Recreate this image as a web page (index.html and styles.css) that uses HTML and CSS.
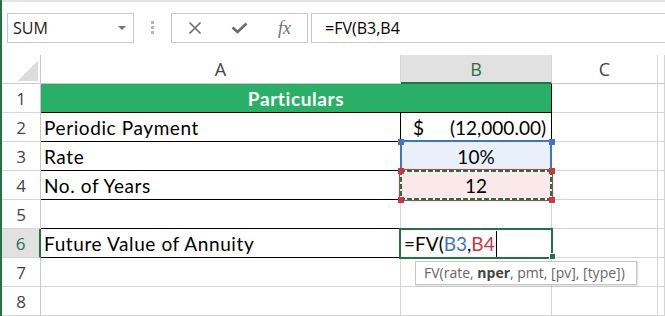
FILE: index.html
```html
<!DOCTYPE html>
<html lang="en">
<head>
    <meta charset="UTF-8">
    <title>FV Formula</title>
    <link rel="stylesheet" href="styles.css">
</head>
<body>

    <div class="app">
        <div class="toolbar">
            <div class="namebox">
                <span>SUM</span>
                <span class="caret"></span>
            </div>
            <div class="grip"><i></i><i></i><i></i></div>
            <div class="fbtns">
                <span class="btn">
                    <svg width="14" height="14" viewBox="0 0 14 14"><path d="M1.5 1.5 L12.5 12.5 M12.5 1.5 L1.5 12.5" stroke="#6a6a6a" stroke-width="1.6" fill="none"/></svg>
                </span>
                <span class="btn">
                    <svg width="17" height="12" viewBox="0 0 17 12"><path d="M1.5 5.5 L6.5 10 L15.5 1.5" stroke="#6a6a6a" stroke-width="2.6" fill="none"/></svg>
                </span>
                <span class="btn fx">fx</span>
            </div>
            <div class="fbar">=FV(B3,B4</div>
        </div>

        <div class="sheet">
            <!-- column headers -->
            <div class="corner"></div>
            <div class="ch">A</div>
            <div class="ch active">B</div>
            <div class="ch">C</div>
            <div class="ch"></div>

            <!-- row 1 -->
            <div class="rh">1</div>
            <div class="c title">Particulars</div>
            <div class="c"></div>
            <div class="c"></div>

            <!-- row 2 -->
            <div class="rh">2</div>
            <div class="c bl label">Periodic Payment</div>
            <div class="c bl money"><span>$</span><span>(12,000.00)</span></div>
            <div class="c"></div>
            <div class="c"></div>

            <!-- row 3 -->
            <div class="rh">3</div>
            <div class="c bl label">Rate</div>
            <div class="c mid ref-blue">
                10%
                <span class="box-blue"></span>
                <span class="dot blue tl"></span>
                <span class="dot blue tr"></span>
            </div>
            <div class="c"></div>
            <div class="c"></div>

            <!-- row 4 -->
            <div class="rh">4</div>
            <div class="c bl label">No. of Years</div>
            <div class="c mid ref-red">
                12
                <span class="box-red"></span>
                <span class="dot red tl"></span>
                <span class="dot red tr"></span>
                <span class="dot red bl2"></span>
                <span class="dot red br"></span>
            </div>
            <div class="c"></div>
            <div class="c"></div>

            <!-- row 5 -->
            <div class="rh">5</div>
            <div class="c bb"></div>
            <div class="c"></div>
            <div class="c"></div>
            <div class="c"></div>

            <!-- row 6 -->
            <div class="rh active">6</div>
            <div class="c bb label">Future Value of Annuity</div>
            <div class="c editing">
                =FV(<span class="r1">B3</span>,<span class="r2">B4</span><span class="cursor"></span>
                <span class="sel"></span>
                <span class="handle"></span>
                <div class="tip">FV(rate, <b>nper</b>, pmt, [pv], [type])</div>
            </div>
            <div class="c"></div>
            <div class="c"></div>

            <!-- row 7 -->
            <div class="rh">7</div>
            <div class="c"></div>
            <div class="c"></div>
            <div class="c"></div>
            <div class="c"></div>

            <!-- row 8 -->
            <div class="rh">8</div>
            <div class="c"></div>
            <div class="c"></div>
            <div class="c"></div>
            <div class="c"></div>
        </div>
    </div>

</body>
</html>
```

FILE: styles.css
```css
body {
    margin: 0;
    background: #fff;
    font-family: "Open Sans", Arial, sans-serif;
    overflow: hidden;
}

.app {
    height: 316px;
    border-left: 2px solid #217346;
    overflow: hidden;
}

/* formula bar row */

.toolbar {
    display: flex;
    align-items: flex-start;
    height: 55px;
    box-sizing: border-box;
    border-top: 2px solid #e4e4e4;
    padding: 11px 0 0 5px;
}

.namebox {
    display: flex;
    align-items: center;
    width: 127px;
    height: 30px;
    box-sizing: border-box;
    border: 1px solid #c6c6c6;
    padding-left: 5px;
    font-size: 16px;
    color: #222;
}

.caret {
    margin-left: auto;
    margin-right: 7px;
    width: 0;
    height: 0;
    border-left: 4px solid transparent;
    border-right: 4px solid transparent;
    border-top: 4px solid #777;
}

.grip {
    display: flex;
    flex-direction: column;
    gap: 2px;
    margin: 8px 0 0 17px;
}

.grip i {
    width: 3px;
    height: 3px;
    background: #b5b5b5;
}

.fbtns {
    display: flex;
    align-items: center;
    margin-left: 17px;
    width: 137px;
    height: 30px;
    box-sizing: border-box;
    border: 1px solid #c6c6c6;
}

.btn {
    display: flex;
    justify-content: center;
    align-items: center;
    width: 45px;
    height: 28px;
}

.fx {
    font-family: "Liberation Serif", serif;
    font-style: italic;
    font-size: 18px;
    color: #707070;
}

.fbar {
    flex: 1;
    margin-left: 3px;
    height: 30px;
    box-sizing: border-box;
    border: 1px solid #c6c6c6;
    border-right: none;
    padding-left: 13px;
    font-size: 16px;
    line-height: 28px;
    color: #000;
}

/* grid */

.sheet {
    display: grid;
    grid-template-columns: 39px 360px 151px 106px 1fr;
    grid-template-rows: repeat(9, 29px);
}

.sheet > div {
    box-sizing: border-box;
}

.corner {
    border-right: 1px solid #c8c8c8;
    border-bottom: 1px solid #c8c8c8;
    background: linear-gradient(to bottom right, transparent 50%, #dcdcdc 50%) right 2px bottom 2px / 20px 20px no-repeat;
}

.ch {
    border-right: 1px solid #d4d4d4;
    border-bottom: 1px solid #c8c8c8;
    text-align: center;
    font-size: 18px;
    line-height: 28px;
    color: #444;
}

.ch.active {
    background: #e1e1e1;
    border-bottom: 2px solid #217346;
    color: #217346;
}

.rh {
    border-right: 1px solid #c8c8c8;
    border-bottom: 1px solid #d4d4d4;
    text-align: center;
    font-size: 17px;
    line-height: 29px;
    color: #444;
}

.rh.active {
    background: #e1e1e1;
    border-right: 2px solid #217346;
    color: #217346;
}

.c {
    border-right: 1px solid #d4d4d4;
    border-bottom: 1px solid #d4d4d4;
    padding: 1px 3px 0;
    font-family: Lato, "Open Sans", sans-serif;
    font-size: 19px;
    line-height: 27px;
    color: #000;
    white-space: nowrap;
}

.label {
    letter-spacing: 0.6px;
}

.title {
    grid-column: span 2;
    background: #29b066;
    border-right-color: #000;
    border-bottom-color: #000;
    color: #fff;
    font-weight: bold;
    text-align: center;
    letter-spacing: 0.6px;
}

.bl {
    border-right-color: #000;
    border-bottom-color: #000;
}

.bb {
    border-bottom-color: #000;
}

.money {
    display: flex;
    justify-content: space-between;
    padding: 1px 5px 0 12px;
}

.mid {
    text-align: center;
}

/* reference highlights */

.ref-blue,
.ref-red,
.editing {
    position: relative;
}

.ref-blue {
    background: #e9f0fa;
}

.ref-red {
    background: #fbe9e9;
}

.box-blue {
    position: absolute;
    left: -1px;
    top: -2px;
    width: 152px;
    height: 31px;
    box-sizing: border-box;
    border: 2px solid #4472c4;
}

.box-red {
    position: absolute;
    left: -2px;
    top: -2px;
    width: 154px;
    height: 32px;
    box-sizing: border-box;
    border: 1px solid #c8383f;
    background:
        repeating-linear-gradient(90deg, #217346 0 5px, #fff 5px 7px) top / 100% 2px no-repeat,
        repeating-linear-gradient(90deg, #217346 0 5px, #fff 5px 7px) bottom / 100% 2px no-repeat,
        repeating-linear-gradient(180deg, #217346 0 5px, #fff 5px 7px) left / 2px 100% no-repeat,
        repeating-linear-gradient(180deg, #217346 0 5px, #fff 5px 7px) right / 2px 100% no-repeat;
    -webkit-mask:
        linear-gradient(#000, #000) top / 100% 3px no-repeat,
        linear-gradient(#000, #000) bottom / 100% 3px no-repeat,
        linear-gradient(#000, #000) left / 3px 100% no-repeat,
        linear-gradient(#000, #000) right / 3px 100% no-repeat;
}

.dot {
    position: absolute;
    width: 6px;
    height: 6px;
}

.dot.blue { background: #4472c4; }
.dot.red { background: #c8383f; }

.dot.tl { left: -3px; top: -3px; }
.dot.tr { left: 148px; top: -3px; }
.dot.bl2 { left: -3px; top: 26px; }
.dot.br { left: 148px; top: 26px; }

/* cell in edit mode */

.editing {
    padding-left: 3px;
}

.r1 { color: #3c75cc; }
.r2 { color: #c8383f; }

.cursor {
    display: inline-block;
    width: 1px;
    height: 27px;
    margin-left: 1px;
    background: #000;
    vertical-align: -7px;
}

.sel {
    position: absolute;
    left: -2px;
    top: -1px;
    width: 154px;
    height: 31px;
    box-sizing: border-box;
    border: 2px solid #217346;
}

.handle {
    position: absolute;
    left: 148px;
    top: 24px;
    width: 5px;
    height: 5px;
    background: #217346;
    border: 1px solid #fff;
}

.tip {
    position: absolute;
    left: 14px;
    top: 32px;
    width: 222px;
    height: 24px;
    box-sizing: border-box;
    padding-left: 8px;
    background: #fff;
    border: 1px solid #c6c6c6;
    box-shadow: 1px 1px 2px rgba(0, 0, 0, 0.15);
    font-family: "Open Sans", sans-serif;
    font-size: 14px;
    line-height: 22px;
    color: #666;
}

.tip b {
    color: #444;
}
```
